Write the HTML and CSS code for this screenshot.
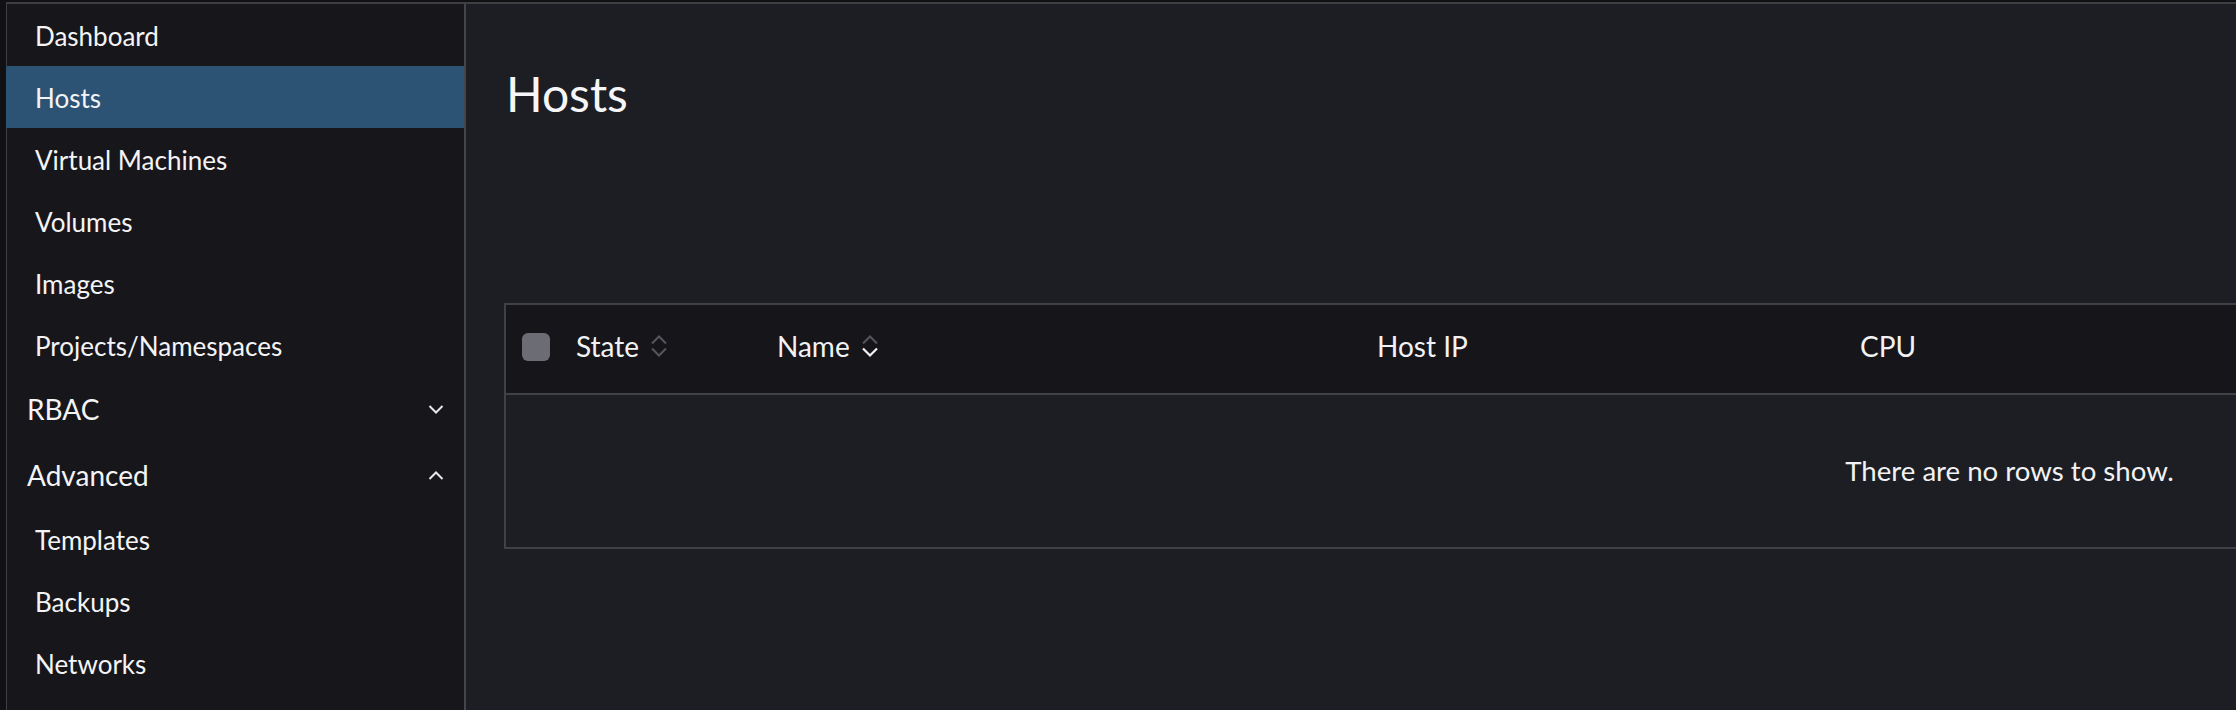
FILE: index.html
```html
<!DOCTYPE html>
<html lang="en">
<head>
<meta charset="utf-8">
<title>Hosts</title>
<link rel="stylesheet" href="styles.css">
</head>
<body>
<div class="app">
  <nav class="sidebar">
    <a class="nav-item">Dashboard</a>
    <a class="nav-item active">Hosts</a>
    <a class="nav-item">Virtual Machines</a>
    <a class="nav-item">Volumes</a>
    <a class="nav-item">Images</a>
    <a class="nav-item">Projects/Namespaces</a>
    <div class="nav-group">
      <span>RBAC</span>
      <svg class="chev" width="16" height="11" viewBox="0 0 16 11"><polyline points="1.5,2 8,8.5 14.5,2" fill="none" stroke="#e8e8ea" stroke-width="2"/></svg>
    </div>
    <div class="nav-group">
      <span>Advanced</span>
      <svg class="chev" width="16" height="11" viewBox="0 0 16 11"><polyline points="1.5,9 8,2.5 14.5,9" fill="none" stroke="#e8e8ea" stroke-width="2"/></svg>
    </div>
    <a class="nav-item">Templates</a>
    <a class="nav-item">Backups</a>
    <a class="nav-item">Networks</a>
  </nav>
  <main class="main">
    <h1 class="title">Hosts</h1>
    <div class="table">
      <div class="thead">
        <div class="th th-check"><span class="checkbox"></span></div>
        <div class="th">State
          <svg class="sort" width="18" height="24" viewBox="0 0 18 24"><polyline points="2,9.5 9,2.5 16,9.5" fill="none" stroke="#55565c" stroke-width="2"/><polyline points="2,14.5 9,21.5 16,14.5" fill="none" stroke="#55565c" stroke-width="2"/></svg>
        </div>
        <div class="th">Name
          <svg class="sort" width="18" height="24" viewBox="0 0 18 24"><polyline points="2,9.5 9,2.5 16,9.5" fill="none" stroke="#55565c" stroke-width="2"/><polyline points="2,14.5 9,21.5 16,14.5" fill="none" stroke="#f2f2f2" stroke-width="2.2"/></svg>
        </div>
        <div class="th">Host IP</div>
        <div class="th">CPU</div>
      </div>
      <div class="tbody">
        <div class="empty">There are no rows to show.</div>
      </div>
    </div>
  </main>
</div>
</body>
</html>
```
FILE: styles.css
```css
html, body {
  margin: 0;
  padding: 0;
  height: 710px;
  overflow: hidden;
  background: #111114;
  font-family: Lato, "Noto Sans", sans-serif;
  color: #f2f2f4;
}

.app {
  display: flex;
  margin: 2px 0 0 6px;
  height: 706px;
  border-top: 2px solid #3e3f44;
  border-left: 1px solid #3e3f44;
}

.sidebar {
  flex: 0 0 457px;
  background: #17171b;
  border-right: 2px solid #44454a;
  display: flex;
  flex-direction: column;
}

.nav-item {
  display: block;
  box-sizing: border-box;
  height: 62px;
  padding-top: 3px;
  line-height: 59px;
  padding-left: 28px;
  font-size: 26px;
  color: #f4f4f6;
}

.nav-item.active {
  background: #2c5373;
  margin-left: -1px;
  padding-left: 29px;
}

.nav-group {
  display: flex;
  align-items: center;
  justify-content: space-between;
  height: 66px;
  line-height: 66px;
  padding: 0 20px 0 20px;
  font-size: 28px;
  color: #f4f4f6;
}

.chev {
  display: block;
}

.main {
  flex: 1;
  min-width: 0;
  overflow: hidden;
  background: #1d1e23;
  padding-left: 38px;
}

.title {
  margin: 61px 0 0 2px;
  font-size: 48px;
  font-weight: 400;
  line-height: 58px;
  color: #f6f6f8;
}

.table {
  margin-top: 180px;
  width: 3007px;
  border: 2px solid #404146;
}

.thead {
  display: grid;
  grid-template-columns: 70px 201px 600px 483px 1fr;
  height: 88px;
  background: #16161a;
  border-bottom: 2px solid #404146;
}

.th {
  display: flex;
  align-items: center;
  gap: 11px;
  padding-bottom: 6px;
  font-size: 28px;
  color: #f2f2f4;
}

.th-check {
  padding-left: 16px;
  padding-bottom: 4px;
}

.checkbox {
  display: block;
  width: 28px;
  height: 28px;
  border-radius: 6px;
  background: #6b6c74;
}

.sort {
  display: block;
}

.tbody {
  height: 152px;
  display: flex;
  align-items: center;
  justify-content: center;
}

.empty {
  font-size: 27.6px;
  color: #f2f2f4;
  padding-bottom: 2px;
}
```
